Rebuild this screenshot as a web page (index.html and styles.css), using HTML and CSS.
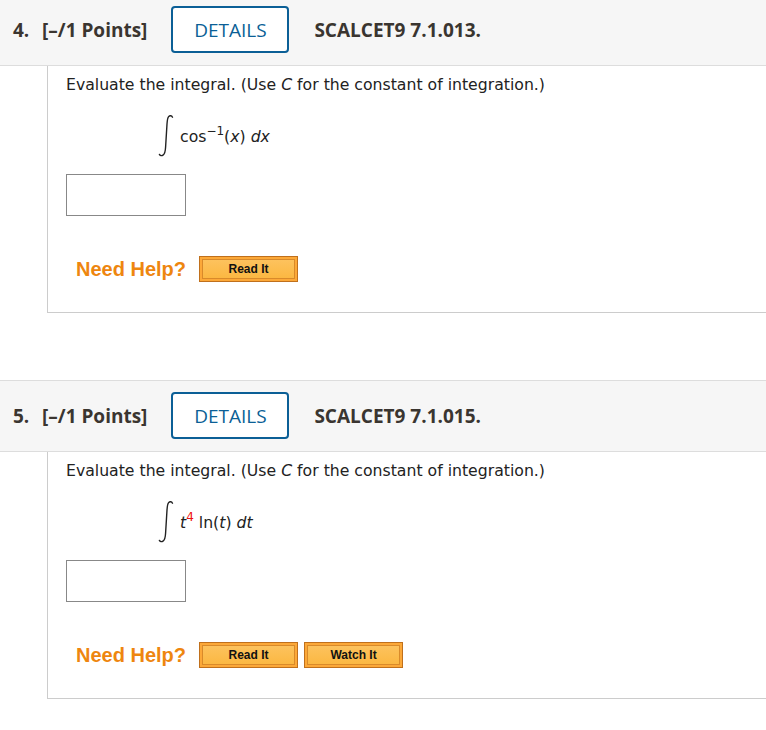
FILE: index.html
```html
<!DOCTYPE html>
<html lang="en">
  <head>
    <meta charset="UTF-8" />
    <meta name="viewport" content="width=device-width,initial-scale=1.0" />
    <title>Questions</title>
    <link rel="stylesheet" href="styles.css">
  </head>
  <body>
    <div class="page">
      <div class="question">
        <div class="q-header">
          <span class="q-num">4.</span>
          <span class="q-points">[&ndash;/1 Points]</span>
          <button type="button" class="details-btn">DETAILS</button>
          <span class="q-code">SCALCET9 7.1.013.</span>
        </div>
        <div class="q-body">
          <p class="prompt">Evaluate the integral. (Use <i>C</i> for the constant of integration.)</p>
          <div class="math">
            <svg class="int-sign" width="16" height="43" viewBox="0 0 16 43">
              <path d="M14.5 3.2 C13.6 1.4 11.8 1.2 10.6 2.6 C9.4 4 9.2 7 9 10 L7.6 33 C7.4 37 6.8 40 5 41.2 C3.6 42.1 2 41.6 1.4 40.4" fill="none" stroke="#222" stroke-width="1.4" stroke-linecap="round" />
            </svg>
            <span class="expr">cos<sup>&minus;1</sup>(<i>x</i>) <i>dx</i></span>
          </div>
          <input type="text" class="answer" />
          <div class="help">
            <span class="help-label">Need Help?</span>
            <button type="button" class="help-btn">Read It</button>
          </div>
        </div>
      </div>

      <div class="question">
        <div class="q-header">
          <span class="q-num">5.</span>
          <span class="q-points">[&ndash;/1 Points]</span>
          <button type="button" class="details-btn">DETAILS</button>
          <span class="q-code">SCALCET9 7.1.015.</span>
        </div>
        <div class="q-body">
          <p class="prompt">Evaluate the integral. (Use <i>C</i> for the constant of integration.)</p>
          <div class="math">
            <svg class="int-sign" width="16" height="43" viewBox="0 0 16 43">
              <path d="M14.5 3.2 C13.6 1.4 11.8 1.2 10.6 2.6 C9.4 4 9.2 7 9 10 L7.6 33 C7.4 37 6.8 40 5 41.2 C3.6 42.1 2 41.6 1.4 40.4" fill="none" stroke="#222" stroke-width="1.4" stroke-linecap="round" />
            </svg>
            <span class="expr"><i>t</i><sup class="red">4</sup> ln(<i>t</i>) <i>dt</i></span>
          </div>
          <input type="text" class="answer" />
          <div class="help">
            <span class="help-label">Need Help?</span>
            <button type="button" class="help-btn">Read It</button>
            <button type="button" class="help-btn">Watch It</button>
          </div>
        </div>
      </div>
    </div>
  </body>
</html>
```

FILE: styles.css
```css
* {
  margin: 0;
  padding: 0;
  box-sizing: border-box;
}
html, body {
  background: #fff;
  font-family: "DejaVu Sans", Verdana, sans-serif;
  color: #222;
}
.page {
  margin-top: -6px;
}
.question {
  margin-bottom: 67px;
}
.q-header {
  display: flex;
  align-items: center;
  background: #f6f6f6;
  border-top: 1px solid #ddd;
  border-bottom: 1px solid #ddd;
  padding: 11px 0 12px 13px;
  font-family: "Open Sans", sans-serif;
  color: #3a3530;
  font-size: 19px;
  font-weight: 700;
}
.q-num {
  width: 29px;
}
.q-points {
  margin-right: 24px;
}
.details-btn {
  font-family: "Open Sans", sans-serif;
  font-size: 19px;
  font-weight: 500;
  color: #0b5f96;
  background: #fff;
  border: 2px solid #0b5f96;
  border-radius: 4px;
  width: 118px;
  height: 47px;
  margin-right: 25px;
}
.q-body {
  margin-left: 47px;
  border-left: 1px solid #ccc;
  border-bottom: 1px solid #ccc;
  padding: 9px 0 0 18px;
  height: 247px;
}
.prompt {
  font-size: 15.7px;
  line-height: 20px;
}
.math {
  display: flex;
  align-items: center;
  margin: 16px 0 0 92px;
  height: 48px;
}
.int-sign {
  margin-right: 6px;
}
.expr {
  font-size: 15.7px;
  margin-top: 2px;
}
.expr sup {
  font-size: 12px;
  vertical-align: 7px;
  line-height: 0;
}
.red {
  color: #e11;
}
.answer {
  display: block;
  width: 120px;
  height: 42px;
  margin-top: 15px;
  border: 1px solid #888;
  background: #fff;
}
.help {
  display: flex;
  align-items: center;
  gap: 6px;
  margin: 40px 0 0 10px;
}
.help-label {
  font-family: "Liberation Sans", Arial, sans-serif;
  font-size: 20px;
  font-weight: 700;
  color: #ee860f;
  margin-right: 7px;
}
.help-btn {
  font-family: "Liberation Sans", Arial, sans-serif;
  font-size: 12px;
  font-weight: 700;
  color: #111;
  width: 99px;
  height: 26px;
  border: 1px solid #c0701c;
  background: linear-gradient(#fdc462, #fbb63e);
  box-shadow: inset 0 0 0 2px #fca838, inset 0 0 0 3px #d98a2a;
}
```
